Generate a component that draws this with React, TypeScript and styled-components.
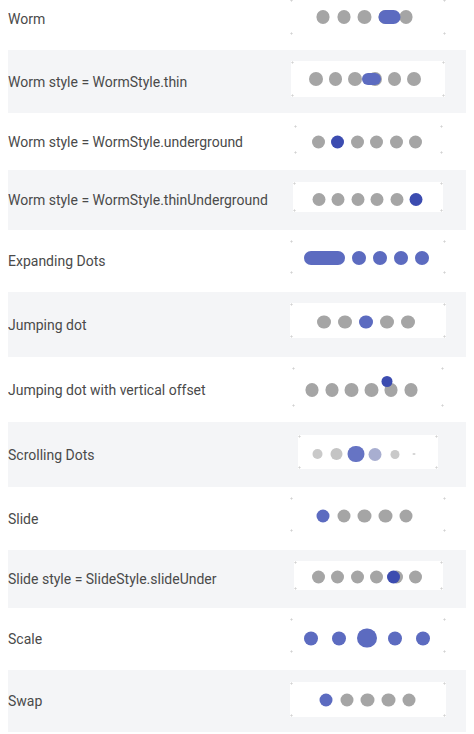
import styled, { createGlobalStyle } from "styled-components";

const GlobalStyle = createGlobalStyle`
  body {
    margin: 0 8px;
    background: #ffffff;
    font-family: Roboto, "Noto Sans", sans-serif;
    overflow: hidden;
  }
`;

const GREY = "#a5a5a5";
const BLUE = "#5c6bc0";
const DEEP = "#3c4cb0";

type Item = { w: number; h?: number; c: string; cell?: number };
type Overlay = { x: number; w: number; h: number; y?: number; c: string };

type Demo = {
  label: string;
  height: number;
  top: number;
  box: [number, number];
  pitch: number;
  dx: number;
  dy: number;
  items: Item[];
  overlays?: Overlay[];
};

const dots = (n: number, size: number, active: Record<number, string> = {}): Item[] =>
  Array.from({ length: n }, (_, i) => ({ w: size, c: active[i] ?? GREY }));

const DEMOS: Demo[] = [
  {
    label: "Worm",
    height: 63, top: 12, box: [156, 36], pitch: 20.75, dx: -3.5, dy: 0,
    items: dots(5, 13.5),
    overlays: [{ x: 76.4, w: 22, h: 13.5, c: BLUE }],
  },
  {
    label: "Worm style = WormStyle.thin",
    height: 63, top: 11, box: [154, 36], pitch: 19.6, dx: -3, dy: 0,
    items: dots(6, 13.5),
    overlays: [{ x: 65.3, w: 19, h: 11.5, c: BLUE }],
  },
  {
    label: "Worm style = WormStyle.underground",
    height: 57, top: 12, box: [149, 29], pitch: 19.4, dx: -1, dy: 2.5,
    items: dots(6, 13, { 1: DEEP }),
  },
  {
    label: "Worm style = WormStyle.thinUnderground",
    height: 60, top: 12, box: [150, 30], pitch: 19.4, dx: -0.5, dy: 2,
    items: dots(6, 13, { 5: DEEP }),
  },
  {
    label: "Expanding Dots",
    height: 62, top: 10, box: [156, 34], pitch: 21, dx: -2, dy: 1,
    items: [{ w: 41, h: 13.5, c: BLUE, cell: 48.5 }, ...dots(4, 13.5).map((d) => ({ ...d, c: BLUE }))],
  },
  {
    label: "Jumping dot",
    height: 65, top: 11, box: [156, 35], pitch: 21, dx: -2, dy: 1.5,
    items: dots(5, 13.5, { 2: BLUE }),
  },
  {
    label: "Jumping dot with vertical offset",
    height: 65, top: 10, box: [152, 40], pitch: 19.8, dx: -6.5, dy: 3,
    items: dots(6, 13.5),
    overlays: [{ x: 84.9, w: 11, h: 11, y: -9, c: DEEP }],
  },
  {
    label: "Scrolling Dots",
    height: 65, top: 13, box: [140, 34], pitch: 19.4, dx: -2.5, dy: 2,
    items: [
      { w: 10, c: "#c9c9c9" },
      { w: 12, c: "#c4c4c4" },
      { w: 16.5, c: "#6674c4" },
      { w: 13, c: "#a8aed0" },
      { w: 9, c: "#c9c9c9" },
      { w: 2.5, c: "#d6d6d6" },
    ],
  },
  {
    label: "Slide",
    height: 63, top: 10, box: [156, 35], pitch: 20.75, dx: -3.5, dy: 1.5,
    items: dots(5, 13.5, { 0: BLUE }),
  },
  {
    label: "Slide style = SlideStyle.slideUnder",
    height: 58, top: 11, box: [149, 29], pitch: 19.4, dx: -1, dy: 1.5,
    items: dots(6, 13),
    overlays: [{ x: 84.2, w: 13, h: 13, c: DEEP }],
  },
  {
    label: "Scale",
    height: 62, top: 10, box: [156, 35], pitch: 28, dx: -1, dy: 2.5,
    items: [
      { w: 14, c: BLUE },
      { w: 14, c: BLUE },
      { w: 19.5, c: BLUE },
      { w: 14, c: BLUE },
      { w: 14, c: BLUE },
    ],
  },
  {
    label: "Swap",
    height: 62, top: 12, box: [156, 35], pitch: 20.75, dx: -0.5, dy: 0.5,
    items: dots(5, 13.5, { 0: BLUE }),
  },
];

const List = styled.div`
  margin-top: -13px;
  display: flex;
  flex-direction: column;
`;

const Row = styled.div<{ $h: number; $alt: boolean }>`
  height: ${(p) => p.$h}px;
  display: flex;
  align-items: flex-start;
  background: ${(p) => (p.$alt ? "#f4f5f7" : "#ffffff")};
`;

const Label = styled.span`
  flex: 1;
  align-self: center;
  font-size: 14px;
  color: #4a4a4a;
  white-space: nowrap;
`;

const Slot = styled.div<{ $top: number }>`
  width: 156px;
  margin-right: 20px;
  padding-top: ${(p) => p.$top}px;
  display: flex;
  justify-content: center;
`;

const corner = (pos: string) =>
  `radial-gradient(circle, #d2d2d2 0.8px, transparent 1.3px) ${pos} / 3px 3px no-repeat`;

const Box = styled.div<{ $w: number; $h: number }>`
  width: ${(p) => p.$w}px;
  height: ${(p) => p.$h}px;
  display: flex;
  align-items: center;
  justify-content: center;
  background: ${corner("left top")}, ${corner("right top")}, ${corner("left bottom")},
    ${corner("right bottom")}, #ffffff;
`;

const Track = styled.div<{ $dx: number; $dy: number }>`
  position: relative;
  display: flex;
  align-items: center;
  transform: translate(${(p) => p.$dx}px, ${(p) => p.$dy}px);
`;

const Cell = styled.div<{ $w: number }>`
  width: ${(p) => p.$w}px;
  flex-shrink: 0;
  display: flex;
  justify-content: center;
  align-items: center;
`;

const Dot = styled.span<{ $w: number; $h: number; $c: string }>`
  display: block;
  flex-shrink: 0;
  width: ${(p) => p.$w}px;
  height: ${(p) => p.$h}px;
  border-radius: 999px;
  background: ${(p) => p.$c};
`;

const Floating = styled(Dot)<{ $x: number; $y: number }>`
  position: absolute;
  left: ${(p) => p.$x - p.$w / 2}px;
  top: calc(50% + ${(p) => p.$y - p.$h / 2}px);
`;

function Indicator({ demo }: { demo: Demo }) {
  return (
    <Box $w={demo.box[0]} $h={demo.box[1]}>
      <Track $dx={demo.dx} $dy={demo.dy}>
        {demo.items.map((d, i) => (
          <Cell key={i} $w={d.cell ?? demo.pitch}>
            <Dot $w={d.w} $h={d.h ?? d.w} $c={d.c} />
          </Cell>
        ))}
        {demo.overlays?.map((o, i) => (
          <Floating key={`o${i}`} $x={o.x} $y={o.y ?? 0} $w={o.w} $h={o.h} $c={o.c} />
        ))}
      </Track>
    </Box>
  );
}

export default function App() {
  return (
    <>
      <GlobalStyle />
      <List>
        {DEMOS.map((demo, i) => (
          <Row key={demo.label} $h={demo.height} $alt={i % 2 === 1}>
            <Label>{demo.label}</Label>
            <Slot $top={demo.top}>
              <Indicator demo={demo} />
            </Slot>
          </Row>
        ))}
      </List>
    </>
  );
}
